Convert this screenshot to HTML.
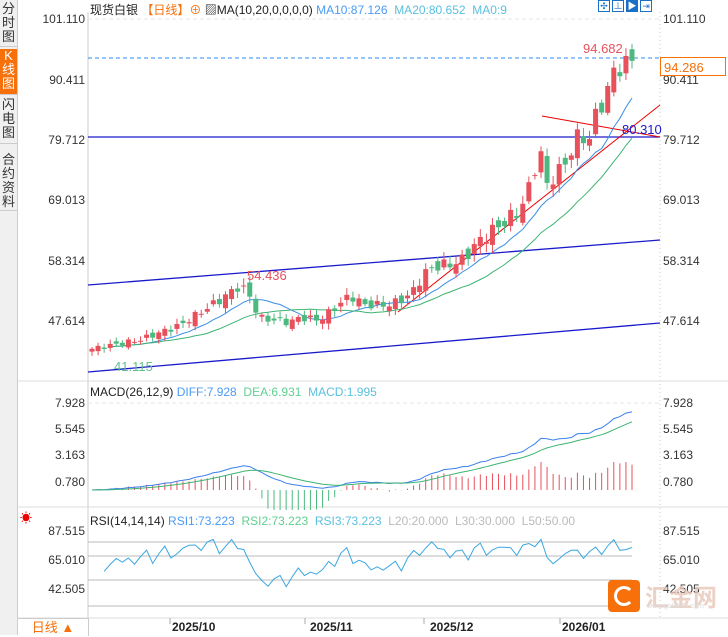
<!DOCTYPE html>
<html><head><meta charset="utf-8">
<style>
body{margin:0;width:728px;height:635px;overflow:hidden;background:#fff;font-family:"Liberation Sans","Noto Sans CJK SC",sans-serif;position:relative}
.side{position:absolute;left:0;top:0;width:17px;height:635px;background:#f0f0f0;border-right:1px solid #ccc}
.tab{position:absolute;left:0;width:17px;font-size:13px;line-height:14px;text-align:center;color:#333;border-bottom:1px solid #ccc}
.ax{position:absolute;font-size:12px;color:#333}
.lab{position:absolute;font-size:12px;white-space:nowrap}
</style></head><body>
<div class="side"></div>
<div class="tab" style="top:2px;height:44px">分<br>时<br>图</div>
<div class="tab" style="top:49px;height:45px;background:#f7700a;color:#fff">K<br>线<br>图</div>
<div class="tab" style="top:98px;height:45px">闪<br>电<br>图</div>
<div class="tab" style="top:153px;height:57px">合<br>约<br>资<br>料</div>
<svg id="s" width="728" height="635" style="position:absolute;left:0;top:0"></svg>
<div class="lab" style="left:90px;top:1px;font-size:12px;color:#222">现货白银 <span style="color:#f7700a">【日线】</span><span style="color:#f7700a">⊕</span> <span style="color:#222">▨MA(10,20,0,0,0,0)</span> <span style="color:#4a9bf5">MA10:87.126</span> &nbsp;<span style="color:#5bc0de">MA20:80.652</span> &nbsp;<span style="color:#5bc0de">MA0:9</span></div>
<div class="lab" style="left:90px;top:385px;color:#222">MACD(26,12,9) <span style="color:#4a9bf5">DIFF:7.928</span> &nbsp;<span style="color:#5fcf8f">DEA:6.931</span> &nbsp;<span style="color:#5bc0de">MACD:1.995</span></div>
<div class="lab" style="left:90px;top:514px;color:#222">RSI(14,14,14) <span style="color:#4a9bf5">RSI1:73.223</span> &nbsp;<span style="color:#5fcf8f">RSI2:73.223</span> &nbsp;<span style="color:#5bc0de">RSI3:73.223</span> &nbsp;<span style="color:#bbb">L20:20.000 &nbsp;L30:30.000 &nbsp;L50:50.00</span></div>
<div class="lab" style="left:20px;top:509px;color:#e00;font-size:12px">☀</div>
<div class="ax" style="right:643px;top:12px">101.110</div>
<div class="ax" style="right:643px;top:73px">90.411</div>
<div class="ax" style="right:643px;top:133px">79.712</div>
<div class="ax" style="right:643px;top:193px">69.013</div>
<div class="ax" style="right:643px;top:254px">58.314</div>
<div class="ax" style="right:643px;top:314px">47.614</div>
<div class="ax" style="right:643px;top:396px">7.928</div>
<div class="ax" style="right:643px;top:422px">5.545</div>
<div class="ax" style="right:643px;top:448px">3.163</div>
<div class="ax" style="right:643px;top:475px">0.780</div>
<div class="ax" style="right:643px;top:524px">87.515</div>
<div class="ax" style="right:643px;top:553px">65.010</div>
<div class="ax" style="right:643px;top:582px">42.505</div>
<div class="ax" style="left:663px;top:12px">101.110</div>
<div class="ax" style="left:663px;top:73px">90.411</div>
<div class="ax" style="left:663px;top:133px">79.712</div>
<div class="ax" style="left:663px;top:193px">69.013</div>
<div class="ax" style="left:663px;top:254px">58.314</div>
<div class="ax" style="left:663px;top:314px">47.614</div>
<div class="ax" style="left:663px;top:396px">7.928</div>
<div class="ax" style="left:663px;top:422px">5.545</div>
<div class="ax" style="left:663px;top:448px">3.163</div>
<div class="ax" style="left:663px;top:475px">0.780</div>
<div class="ax" style="left:663px;top:524px">87.515</div>
<div class="ax" style="left:663px;top:553px">65.010</div>
<div class="ax" style="left:663px;top:582px">42.505</div>
<div style="position:absolute;left:660px;top:57px;width:66px;height:19px;border:1px solid #f7700a;background:#fff;color:#f7700a;font-size:13px;line-height:19px;padding-left:3px;box-sizing:border-box">94.286</div>
<div class="lab" style="left:583px;top:41px;color:#e8505b;font-size:13px">94.682</div>
<div class="lab" style="left:622px;top:122px;color:#1a1acc;font-size:13px">80.310</div>
<div class="lab" style="left:247px;top:268px;color:#e8505b;font-size:13px">54.436</div>
<div class="lab" style="left:114px;top:359px;color:#5fbf8f;font-size:13px">41.115</div>
<div style="position:absolute;left:18px;top:618px;width:70px;height:17px;border-top:1px solid #ccc;border-right:1px solid #ccc;color:#f7700a;font-size:13px;line-height:18px;text-align:center">日线 ▲</div>
<div class="lab" style="left:172px;top:620px;font-weight:bold;color:#222">2025/10</div>
<div class="lab" style="left:310px;top:620px;font-weight:bold;color:#222">2025/11</div>
<div class="lab" style="left:430px;top:620px;font-weight:bold;color:#222">2025/12</div>
<div class="lab" style="left:562px;top:620px;font-weight:bold;color:#222">2026/01</div>
<div style="position:absolute;left:608px;top:580px;width:32px;height:32px;background:#f7700a;border-radius:4px"><div style="position:absolute;left:6px;top:6px;width:14px;height:14px;border:3px solid #fff;border-radius:50%;border-right-color:transparent"></div></div>
<div class="lab" style="left:645px;top:578px;color:#e8c8b8;font-size:24px;font-weight:bold;opacity:.8">汇金网</div>
<div class="lab" style="left:647px;top:603px;color:#ddd;font-size:7px">www.gold678.com</div>
<div style="position:absolute;left:598px;top:0;width:64px;height:12px;display:flex;gap:2px">
<div style="width:12px;height:12px;border:1px solid #1a6fc7;box-sizing:border-box;color:#1a6fc7;font-size:9px;line-height:10px;text-align:center">✣</div>
<div style="width:12px;height:12px;border:1px solid #1a6fc7;box-sizing:border-box;color:#1a6fc7;font-size:9px;line-height:10px;text-align:center">⊥</div>
<div style="width:12px;height:12px;background:#1a6fc7;color:#fff;font-size:9px;line-height:12px;text-align:center">▶</div>
<div style="width:12px;height:12px;border:1px solid #1a6fc7;box-sizing:border-box;color:#1a6fc7;font-size:9px;line-height:10px;text-align:center">⇥</div>
</div>
<script>
var S=document.getElementById('s'),h='';
function L(x1,y1,x2,y2,c,w,d){h+='<line x1="'+x1+'" y1="'+y1+'" x2="'+x2+'" y2="'+y2+'" stroke="'+c+'" stroke-width="'+(w||1)+'"'+(d?' stroke-dasharray="'+d+'"':'')+'/>';}
function R(x,y,w,hh,c){h+='<rect x="'+x+'" y="'+y+'" width="'+w+'" height="'+Math.max(hh,1)+'" fill="'+c+'"/>';}
L(88,12,88,618,'#ccc');L(660,12,660,618,'#ccc',1,'1 3');
L(17,381,728,381,'#ddd');L(17,507,728,507,'#ddd');L(17,618,728,618,'#ddd');
L(88,19,660,19,'#e4e4e4',1,'4 3');L(88,403,660,403,'#e4e4e4',1,'4 3');
[542,556,580,606].forEach(function(y){L(88,y,632,y,'#bbb');});
var kp=[[92,42.5],[140,44.1],[180,46.7],[220,51.2],[240,53.8],[253,51.2],[258,48],[290,47.2],[300,48.1],[320,47.6],[350,52],[365,50.3],[390,50.3],[410,52],[420,54.7],[430,56.9],[460,57.9],[480,61.8],[500,64.5],[520,67.1],[530,71.6],[540,77.8],[547,71.6],[560,74.3],[570,76.9],[578,80.5],[590,79.6],[596,84.6],[606,86.7],[612,92.4],[620,92],[627,93.5],[632,94.3]];
function P(x){for(var i=1;i<kp.length;i++)if(x<=kp[i][0]){var a=kp[i-1],b=kp[i];return a[1]+(b[1]-a[1])*(x-a[0])/(b[0]-a[0]);}return 94.3;}
function Y(p){return 19+(101.11-p)*5.627;}
var n=90,st=(632-92)/(n-1),C=[],X=[];
for(var i=0;i<n;i++){var x=92+i*st;X.push(x);var v=Math.min(1.3,0.4+0.04*(P(x)-42));C.push(P(x)+Math.sin(i*2.3)*v);}
L(88,285,660,240,'#1a1acc',1.3);L(88,372,660,323,'#1a1acc',1.3);
L(88,137,660,137,'#1a1acc',1.3);L(88,58,660,58,'#2a8ef0',1,'4 3');
L(398,312,660,105,'#e00',1);L(542,116,660,137,'#e00',1);
function ma(k){var r=[];for(var i=0;i<n;i++){var s=0,c=0;for(var j=Math.max(0,i-k+1);j<=i;j++){s+=C[j];c++;}r.push(s/c);}return r;}
function pl(arr,f,col,i0){var d='';for(var i=i0||0;i<n;i++)d+=(d?'L':'M')+X[i].toFixed(1)+' '+f(arr[i]).toFixed(1);h+='<path d="'+d+'" fill="none" stroke="'+col+'" stroke-width="1"/>';}
pl(ma(10),Y,'#3a8ee6',3);pl(ma(20),Y,'#3cb371',3);
for(var i=0;i<n;i++){var v=Math.min(1.2,0.4+0.05*(C[i]-42));var o=i?C[i-1]+Math.sin(i*5.1)*v:C[0]-0.5,c=C[i],up=c>=o,col=up?'#e8505b':'#4db87f';
var hi=Math.max(o,c)+0.3+Math.abs(Math.sin(i*3.7))*v,lo=Math.min(o,c)-0.3-Math.abs(Math.cos(i*2.9))*v;
L(X[i],Y(hi),X[i],Y(lo),col);R(X[i]-2.5,Y(Math.max(o,c)),5,Y(Math.min(o,c))-Y(Math.max(o,c)),col);}
function ema(a,k){var r=[],e=a[0];for(var i=0;i<a.length;i++){e=e+(a[i]-e)*2/(k+1);r.push(e);}return r;}
var e12=ema(C,12),e26=ema(C,26),D=[];for(var i=0;i<n;i++)D.push(e12[i]-e26[i]);var E=ema(D,9);
var sc=7.1/Math.max.apply(null,D);
for(var i=0;i<n;i++){var m=(D[i]-E[i])*2*sc,col=m>=0?'#e8505b':'#4db87f';var y0=490,y1=490-m*(m>=0?14:24);if(y1>510)y1=510;if(y1<462)y1=462;L(X[i],Math.min(y0,y1),X[i],Math.max(y0,y1),col,1);}
pl(D,function(v){return 490-v*sc*11;},'#3a7ff0',0);pl(E,function(v){return 490-v*sc*11;},'#3cb371',0);
var Rs=[],g=0.3,l=0.3;for(var i=0;i<n;i++){var d=i?C[i]-C[i-1]:0;g=g+((d>0?d:0)-g)/6;l=l+((d<0?-d:0)-l)/6;var r=l+g>0?100*g/(g+l):60;r=50+(r-50)*0.55+8+Math.sin(i*1.7)*3;Rs.push(r);}
pl(Rs,function(v){return 531+(87.515-v)*1.289;},'#3aa7e0',2);
[170,305,424,560].forEach(function(x){L(x,618,x,624,'#aaa');});
S.innerHTML=h;
</script>
</body></html>
